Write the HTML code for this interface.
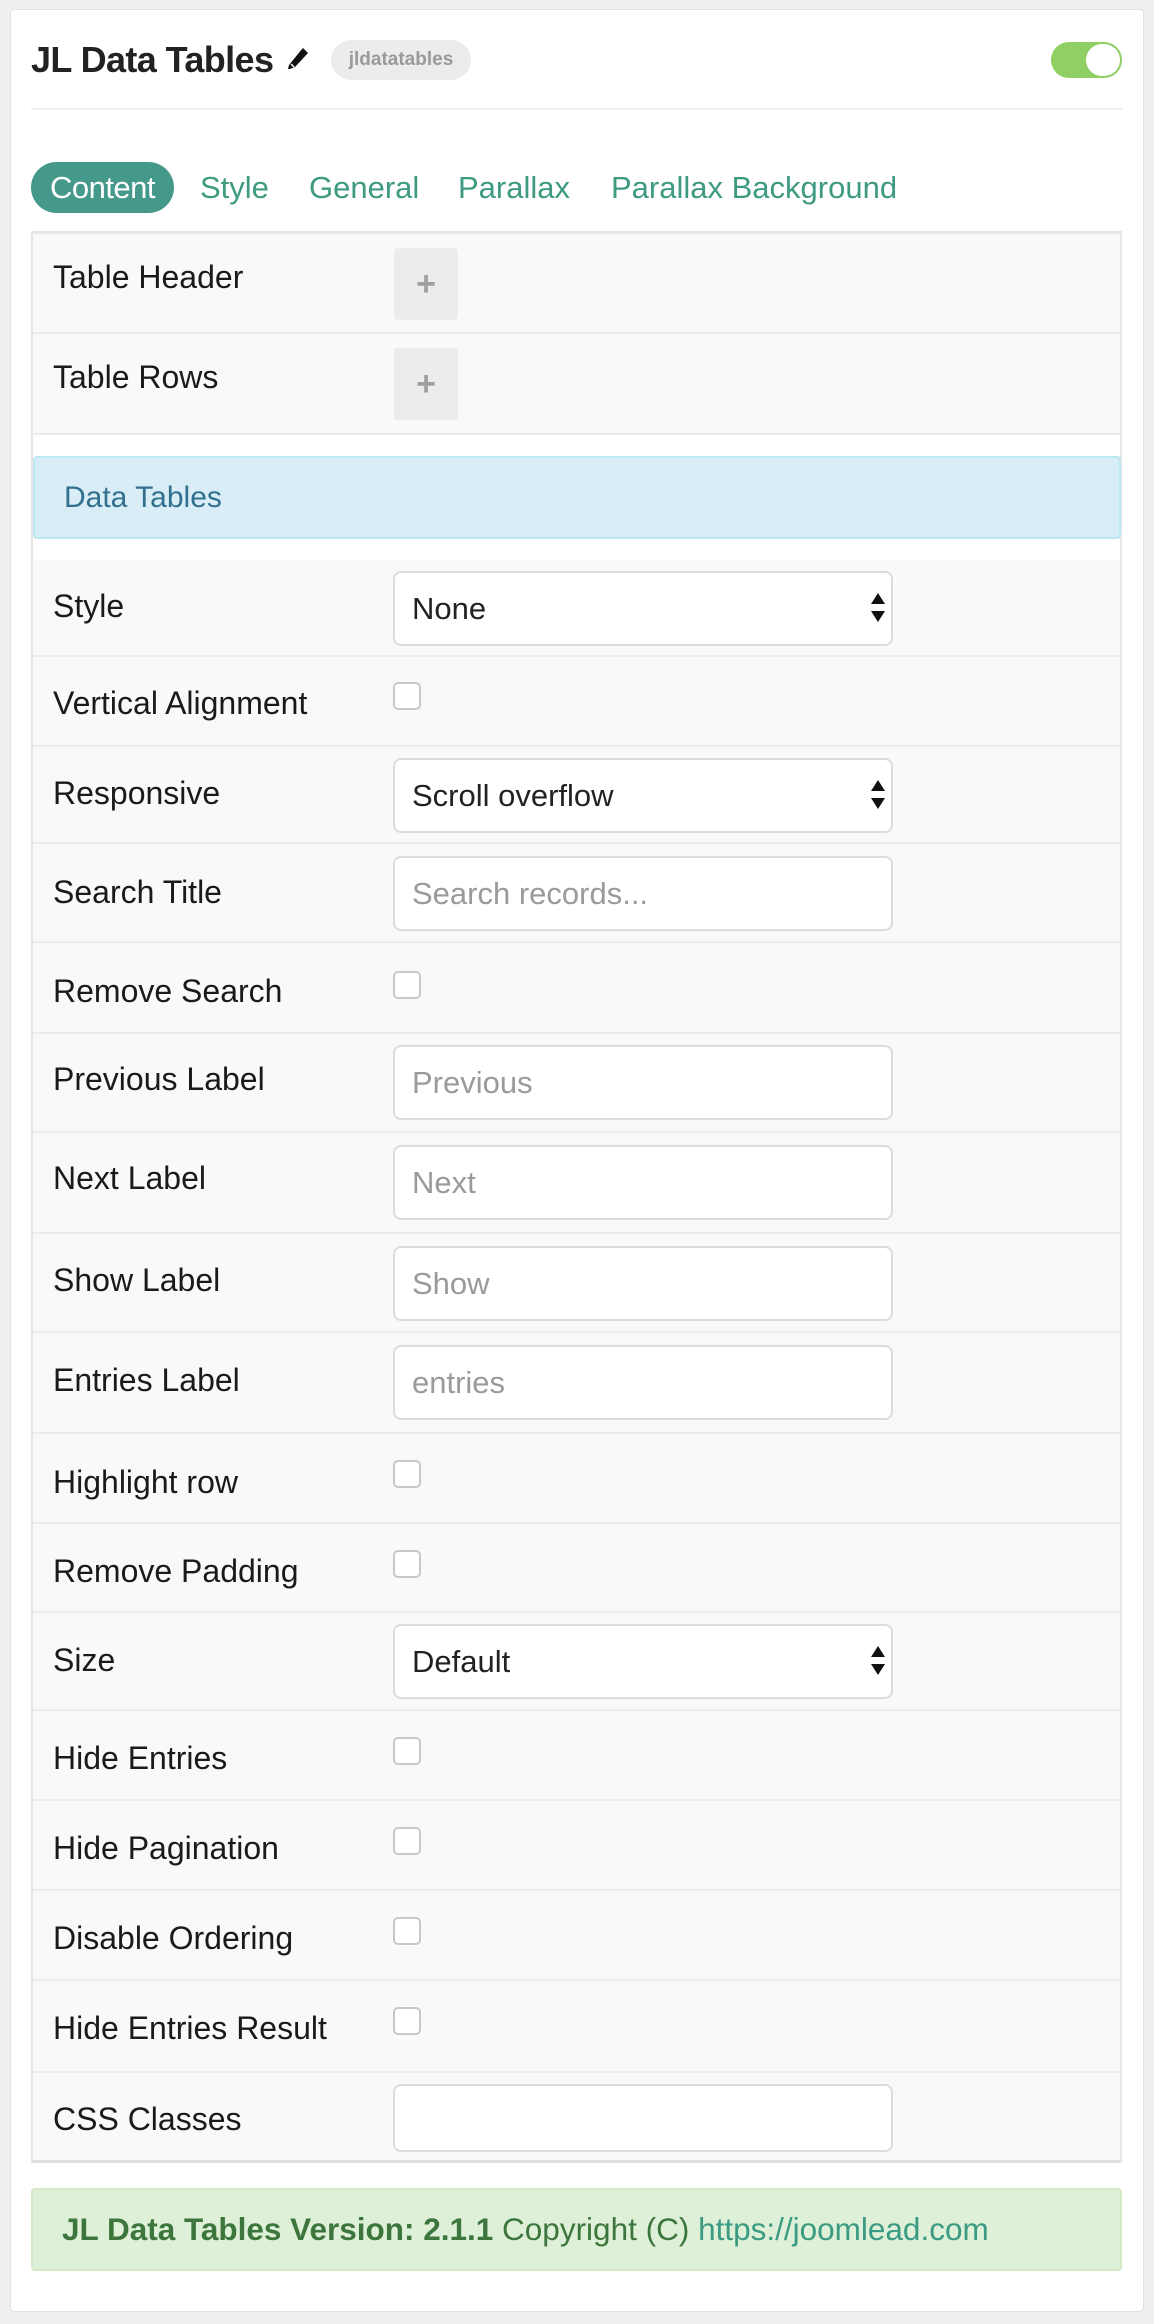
<!DOCTYPE html>
<html><head><meta charset="utf-8"><style>
*{box-sizing:border-box;margin:0;padding:0}
body{width:1154px;height:2324px;background:#efefef;font-family:"Liberation Sans",sans-serif;position:relative;overflow:hidden;color:#222}
.card{position:absolute;left:10px;top:9px;width:1134px;height:2303px;background:#fff;border:1px solid #e2e2e2;border-radius:4px}
.a{position:absolute}
.title{left:31px;top:40px;font-size:36px;font-weight:bold;letter-spacing:-0.6px;line-height:40px;white-space:nowrap}
.badge{left:331px;top:40px;width:140px;height:40px;border-radius:20px;background:#ececec;color:#9a9a9a;font-weight:bold;font-size:19px;line-height:40px;text-align:center}
.tog{left:1051px;top:42px;width:71px;height:36px;border-radius:18px;background:#8fcf63}
.tog:after{content:"";position:absolute;right:2px;top:2px;width:34px;height:32px;border-radius:16px;background:#fff}
.hr{left:31px;top:108px;width:1091px;height:2px;background:#eee}
.tab{top:162px;height:51px;line-height:51px;font-size:31px;color:#3f9a82;white-space:nowrap}
.pill{left:31px;width:143px;background:#45998a;color:#fff;border-radius:26px;text-align:center;letter-spacing:-0.5px}
.tbl{left:31px;top:231px;width:1091px;height:1932px;background:#f9f9f9;border:2px solid #e6e6e6;border-top:3px solid #e6e6e6}
.row{position:absolute;left:33px;width:1087px;border-bottom:2px solid #ececec}
.lbl{position:absolute;left:20px;font-size:32px;line-height:36px;color:#1a1a1a;white-space:nowrap;margin-top:2px}
.plus{position:absolute;left:361px;top:14px;width:64px;height:72px;background:#ececec;border-radius:4px;color:#a0a0a0;font-size:34px;font-weight:bold;text-align:center;line-height:72px}
.sel,.inp{position:absolute;left:360px;width:500px;height:75px;background:#fff;border:2px solid #dcdcdc;border-radius:8px;font-size:31px;line-height:71px;padding-left:17px;white-space:nowrap}
.inp{color:#9a9a9a}
.sel:after{content:"";position:absolute;right:6px;top:20px;border:7px solid transparent;border-bottom:11px solid #111;border-top:0}
.sel:before{content:"";position:absolute;right:6px;top:38px;border:7px solid transparent;border-top:11px solid #111;border-bottom:0}
.cb{position:absolute;left:360px;width:28px;height:28px;background:#fff;border:2px solid #c8c8c8;border-radius:5px}
</style></head><body>
<div class="card"></div>
<div class="a title">JL Data Tables</div>
<svg class="a" style="left:287px;top:47px" width="22" height="24" viewBox="0 0 22 24"><path d="M16 1 L21 6 L8 20 L3 22 L1 22 L2 18 L15 2 Z" fill="#111"/><path d="M4 17 L7 20" stroke="#fff" stroke-width="1.5"/></svg>
<div class="a badge">jldatatables</div>
<div class="a tog"></div>
<div class="a hr"></div>
<div class="a tab pill">Content</div>
<div class="a tab" style="left:200px">Style</div>
<div class="a tab" style="left:309px">General</div>
<div class="a tab" style="left:458px">Parallax</div>
<div class="a tab" style="left:611px">Parallax Background</div>
<div class="a tbl"></div>
<div class="a" style="left:33px;top:435px;width:1087px;height:125px;background:#fff"></div>
<div class="a" style="left:33px;top:456px;width:1088px;height:83px;background:#d9edf7;border:2px solid #bce8f1;border-radius:4px;color:#31708f;font-size:30px;line-height:79px;padding-left:29px">Data Tables</div>

<div class="row" style="top:234px;height:100px"><div class="lbl" style="top:23px">Table Header</div><div class="plus">+</div></div>
<div class="row" style="top:334px;height:101px"><div class="lbl" style="top:23px">Table Rows</div><div class="plus">+</div></div>

<div class="row" style="top:560px;height:97px"><div class="lbl" style="top:26px">Style</div><div class="sel" style="top:11px">None</div></div>
<div class="row" style="top:657px;height:90px"><div class="lbl" style="top:26px">Vertical Alignment</div><div class="cb" style="top:25px"></div></div>
<div class="row" style="top:747px;height:97px"><div class="lbl" style="top:26px">Responsive</div><div class="sel" style="top:11px">Scroll overflow</div></div>
<div class="row" style="top:844px;height:99px"><div class="lbl" style="top:28px">Search Title</div><div class="inp" style="top:12px">Search records...</div></div>
<div class="row" style="top:943px;height:91px"><div class="lbl" style="top:28px">Remove Search</div><div class="cb" style="top:28px"></div></div>
<div class="row" style="top:1034px;height:99px"><div class="lbl" style="top:25px">Previous Label</div><div class="inp" style="top:11px">Previous</div></div>
<div class="row" style="top:1133px;height:101px"><div class="lbl" style="top:25px">Next Label</div><div class="inp" style="top:12px">Next</div></div>
<div class="row" style="top:1234px;height:99px"><div class="lbl" style="top:26px">Show Label</div><div class="inp" style="top:12px">Show</div></div>
<div class="row" style="top:1333px;height:101px"><div class="lbl" style="top:27px">Entries Label</div><div class="inp" style="top:12px">entries</div></div>
<div class="row" style="top:1434px;height:90px"><div class="lbl" style="top:28px">Highlight row</div><div class="cb" style="top:26px"></div></div>
<div class="row" style="top:1524px;height:89px"><div class="lbl" style="top:27px">Remove Padding</div><div class="cb" style="top:26px"></div></div>
<div class="row" style="top:1613px;height:98px"><div class="lbl" style="top:27px">Size</div><div class="sel" style="top:11px">Default</div></div>
<div class="row" style="top:1711px;height:90px"><div class="lbl" style="top:27px">Hide Entries</div><div class="cb" style="top:26px"></div></div>
<div class="row" style="top:1801px;height:90px"><div class="lbl" style="top:27px">Hide Pagination</div><div class="cb" style="top:26px"></div></div>
<div class="row" style="top:1891px;height:90px"><div class="lbl" style="top:27px">Disable Ordering</div><div class="cb" style="top:26px"></div></div>
<div class="row" style="top:1981px;height:92px"><div class="lbl" style="top:27px">Hide Entries Result</div><div class="cb" style="top:26px"></div></div>
<div class="row" style="top:2073px;height:90px;border-bottom:3px solid #e0e0e0"><div class="lbl" style="top:26px">CSS Classes</div><div class="inp" style="top:11px;height:68px"></div></div>

<div class="a" style="left:31px;top:2188px;width:1091px;height:83px;background:#dff0d8;border:2px solid #d6e9c6;border-radius:4px;color:#3c763d;font-size:31.5px;line-height:79px;padding-left:29px;white-space:nowrap"><b>JL Data Tables Version: 2.1.1</b> Copyright (C) <span style="color:#3a9a82">https://joomlead.com</span></div>
</body></html>
